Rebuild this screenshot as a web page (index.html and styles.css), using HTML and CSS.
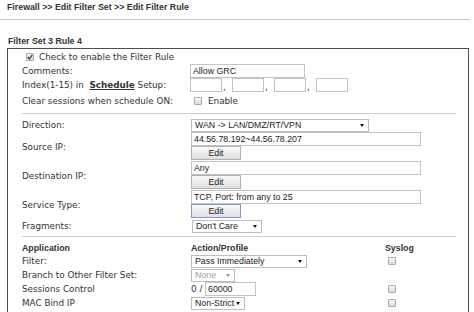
FILE: index.html
```html
<!DOCTYPE html>
<html lang="en">

<head>
    <meta charset="UTF-8">
    <meta name="viewport" content="width=device-width, initial-scale=1.0">
    <title>Edit Filter Rule</title>
    <link rel="stylesheet" href="styles.css">
</head>

<body>
    <div class="page-title">Firewall &gt;&gt; Edit Filter Set &gt;&gt; Edit Filter Rule</div>
    <div class="set-title">Filter Set 3 Rule 4</div>

    <div class="rule-box">
        <div class="section first">
            <div class="row">
                <div class="label wide-label">
                    <span class="check checked"><svg width="6" height="6" viewBox="0 0 6 6"><path d="M0.8 3 L2.4 4.8 L5.3 0.9" fill="none" stroke="#333" stroke-width="1.2"/></svg></span>
                    Check to enable the Filter Rule
                </div>
            </div>
            <div class="row">
                <div class="label">Comments:</div>
                <div class="value"><input type="text" class="text-field comments" value="Allow GRC"></div>
            </div>
            <div class="row">
                <div class="label">Index(1-15) in&nbsp; <a class="link">Schedule</a> Setup:</div>
                <div class="value index-fields">
                    <input type="text" class="text-field index"><span class="comma">,</span>
                    <input type="text" class="text-field index"><span class="comma">,</span>
                    <input type="text" class="text-field index"><span class="comma">,</span>
                    <input type="text" class="text-field index">
                </div>
            </div>
            <div class="row spaced">
                <div class="label">Clear sessions when schedule ON:</div>
                <div class="value"><span class="check enable-check"></span>Enable</div>
            </div>
        </div>

        <div class="section second">
            <div class="row">
                <div class="label">Direction:</div>
                <div class="value">
                    <div class="dropdown direction">WAN -&gt; LAN/DMZ/RT/VPN<span class="arrow"></span></div>
                </div>
            </div>
            <div class="row tall">
                <div class="label">Source IP:</div>
                <div class="value stack">
                    <input type="text" class="text-field address" value="44.56.78.192~44.56.78.207">
                    <button class="edit-button">Edit</button>
                </div>
            </div>
            <div class="row tall">
                <div class="label">Destination IP:</div>
                <div class="value stack">
                    <input type="text" class="text-field address" value="Any">
                    <button class="edit-button">Edit</button>
                </div>
            </div>
            <div class="row tall">
                <div class="label">Service Type:</div>
                <div class="value stack">
                    <input type="text" class="text-field address" value="TCP, Port: from any to 25">
                    <button class="edit-button focused">Edit</button>
                </div>
            </div>
            <div class="row">
                <div class="label">Fragments:</div>
                <div class="value">
                    <div class="dropdown fragments">Don't Care<span class="arrow"></span></div>
                </div>
            </div>
        </div>

        <div class="section third">
            <div class="row head">
                <div class="label">Application</div>
                <div class="value">Action/Profile</div>
                <div class="syslog">Syslog</div>
            </div>
            <div class="row">
                <div class="label">Filter:</div>
                <div class="value">
                    <div class="dropdown action">Pass Immediately<span class="arrow"></span></div>
                </div>
                <div class="syslog"><span class="check"></span></div>
            </div>
            <div class="row">
                <div class="label">Branch to Other Filter Set:</div>
                <div class="value">
                    <div class="dropdown branch disabled">None<span class="arrow"></span></div>
                </div>
            </div>
            <div class="row">
                <div class="label">Sessions Control</div>
                <div class="value"><span class="sessions-text">0 /</span><input type="text" class="text-field sessions" value="60000"></div>
                <div class="syslog"><span class="check"></span></div>
            </div>
            <div class="row">
                <div class="label">MAC Bind IP</div>
                <div class="value">
                    <div class="dropdown mac">Non-Strict<span class="arrow"></span></div>
                </div>
                <div class="syslog"><span class="check"></span></div>
            </div>
        </div>
    </div>
</body>
</html>
```

FILE: styles.css
```css
body {
    margin: 0;
    height: 312px;
    overflow: hidden;
    background-color: #ffffff;
    color: #333333;
    font-family: "DejaVu Sans", Verdana, sans-serif;
    font-size: 8.8px;
}

.page-title {
    width: 463px;
    height: 17px;
    padding: 2px 0 0 7px;
    border-bottom: 1px solid #c8c8c8;
    font-family: "Liberation Sans", Arial, sans-serif;
    font-weight: bold;
    line-height: 10px;
}

.set-title {
    margin: 16px 0 2px 8px;
    font-family: "Liberation Sans", Arial, sans-serif;
    font-weight: bold;
    line-height: 10px;
}

.rule-box {
    margin-left: 7px;
    width: 434px;
    height: 280px;
    padding: 0 12px 0 14px;
    border: 1px solid #4d4d4d;
}

.section + .section {
    border-top: 1px solid #cfcfcf;
}

.section.first {
    padding: 1px 0 5px;
}

.section.second {
    padding: 4px 0 3px;
}

.section.third {
    padding-top: 5px;
}

.row {
    display: grid;
    grid-template-columns: 169px 193px 1fr;
    align-items: center;
    height: 14px;
}

.row.spaced {
    margin-top: 1px;
    height: 15px;
}

.row.tall {
    height: 29px;
}

.row.head {
    height: 12px;
    font-family: "Liberation Sans", Arial, sans-serif;
    font-weight: bold;
}

.label {
    white-space: nowrap;
}

.wide-label {
    grid-column: 1 / 3;
    display: flex;
    align-items: center;
    padding-left: 4px;
}

.link {
    font-weight: bold;
    text-decoration: underline;
    color: #333333;
}

.value {
    display: flex;
    align-items: center;
    white-space: nowrap;
}

.value.stack {
    flex-direction: column;
    align-items: flex-start;
    align-self: start;
}

.text-field {
    box-sizing: border-box;
    height: 14px;
    margin: 0;
    padding: 0 2px;
    border: 1px solid #c3c3c3;
    background-color: #ffffff;
    color: #222222;
    font-family: "Liberation Sans", Arial, sans-serif;
    font-size: 8.8px;
    outline: none;
}

.text-field.comments {
    width: 115px;
    margin-left: -1px;
}

.index-fields {
    margin-left: -1px;
}

.text-field.index {
    width: 32px;
}

.comma {
    width: 10px;
    padding-left: 1px;
    box-sizing: border-box;
    align-self: flex-end;
    line-height: 10px;
}

.text-field.address {
    width: 230px;
}

.text-field.sessions {
    width: 51px;
}

.sessions-text {
    width: 14px;
}

.edit-button {
    box-sizing: border-box;
    width: 50px;
    height: 14px;
    margin: 0;
    padding: 0;
    border: 1px solid #b0b0b0;
    background: linear-gradient(#fbfbfb, #dedede);
    color: #222222;
    font-family: "Liberation Sans", Arial, sans-serif;
    font-size: 8.8px;
}

.edit-button.focused {
    border-color: #7f9cc4;
}

.dropdown {
    box-sizing: border-box;
    display: flex;
    align-items: center;
    justify-content: space-between;
    height: 13px;
    padding: 0 4px 0 3px;
    border: 1px solid #bdbdbd;
    background-color: #ffffff;
    color: #222222;
    font-family: "Liberation Sans", Arial, sans-serif;
}

.dropdown.direction {
    width: 178px;
}

.dropdown.fragments {
    width: 70px;
    margin-left: 1px;
}

.dropdown.action {
    width: 116px;
}

.dropdown.branch {
    width: 44px;
}

.dropdown.mac {
    width: 54px;
}

.dropdown.disabled {
    color: #a0a0a0;
}

.arrow {
    width: 0;
    height: 0;
    border-left: 2px solid transparent;
    border-right: 2px solid transparent;
    border-top: 3px solid #111111;
}

.disabled .arrow {
    border-top-color: #999999;
}

.check {
    box-sizing: border-box;
    display: inline-flex;
    align-items: center;
    justify-content: center;
    width: 8px;
    height: 8px;
    border: 1px solid #acacac;
    border-radius: 1px;
    background: linear-gradient(#f6f6f6, #dadada);
}

.check.checked {
    margin-right: 5px;
}

.enable-check {
    margin: 0 6px 0 3px;
}

.syslog {
    padding-left: 1px;
    display: flex;
    align-items: center;
}

.syslog .check {
    margin-left: 3px;
}
```
